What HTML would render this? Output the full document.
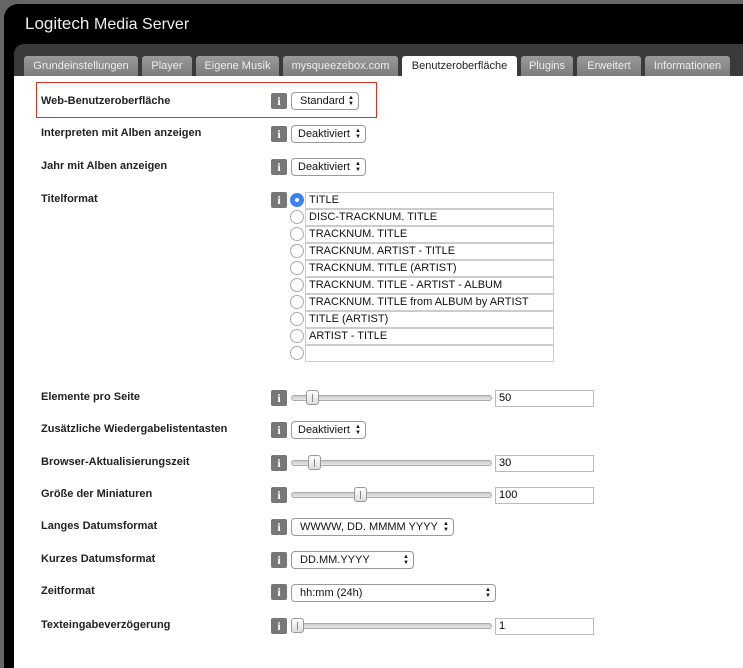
<!DOCTYPE html><html><head><style>
*{box-sizing:border-box;margin:0;padding:0}
html,body{width:743px;height:668px;overflow:hidden}
body{background:#666;position:relative;font-family:"Liberation Sans",sans-serif}
.a{position:absolute}
#blk{left:4px;top:4px;width:739px;height:664px;background:#000;border-radius:14px 0 0 0}
#band{left:14px;top:44px;width:729px;height:40px;background:#3a3a3a;border-radius:10px 0 0 0}
#white{left:14px;top:76px;width:729px;height:592px;background:#fff}
.tab{position:absolute;top:56px;height:20px;background:linear-gradient(#9a9a9a,#7c7c7c);color:#eee;font-size:11px;text-align:center;line-height:20px;border-radius:3px 3px 0 0}
.tab.on{background:#fff;color:#222}
.lbl{position:absolute;left:41px;font-size:11px;font-weight:bold;color:#222}
.i{position:absolute;left:271px;width:16px;height:16px;background:#777;color:#fff;font:bold 12px "Liberation Serif",serif;text-align:center;line-height:16px;border-radius:2px}
.sel{position:absolute;left:291px;height:18px;border:1px solid #999;border-radius:4px;font-size:11px;line-height:16px;padding-left:8px;color:#111;background:#fff}
.sel:after{content:"\25B2\A\25BC";white-space:pre;position:absolute;right:4px;top:2px;font-size:6px;line-height:6px}
.rad{position:absolute;left:290px;width:14px;height:14px;border:1px solid #aaa;border-radius:50%;background:#fff}
.tb{position:absolute;left:305px;width:249px;height:17px;border:1px solid #ccc;font-size:11px;line-height:15px;padding-left:3px;color:#111}
.trk{position:absolute;left:291px;width:201px;height:6px;border:1px solid #aaa;border-radius:3px;background:linear-gradient(#ccc,#e8e8e8)}
.th{position:absolute;width:13px;height:15px;border:1px solid #999;border-radius:3px;background:linear-gradient(#fff,#ddd)}
.th:after{content:"";position:absolute;left:5px;top:3px;width:1px;height:8px;background:#888}
.inp{position:absolute;left:495px;width:99px;height:17px;border:1px solid #bbb;font-size:11px;line-height:15px;padding-left:3px}
</style></head><body>
<div class="a" id="blk"></div>
<div class="a" style="left:25px;top:14px;color:#eee;font-size:17px">Logitech <span style="font-size:16px">Media Server</span></div>
<div class="a" id="band"></div>
<div class="a" id="white"></div>
<div class="tab" style="left:24px;width:114px">Grundeinstellungen</div>
<div class="tab" style="left:142px;width:50px">Player</div>
<div class="tab" style="left:196px;width:83px">Eigene Musik</div>
<div class="tab" style="left:283px;width:115px">mysqueezebox.com</div>
<div class="tab on" style="left:402px;width:115px">Benutzeroberfläche</div>
<div class="tab" style="left:521px;width:52px">Plugins</div>
<div class="tab" style="left:577px;width:64px">Erweitert</div>
<div class="tab" style="left:645px;width:85px">Informationen</div>
<div class="a" style="left:36px;top:82px;width:341px;height:36px;border:1px solid #e03020"></div>

<div class="lbl" style="top:95px">Web-Benutzeroberfläche</div><div class="i" style="top:93px">i</div><div class="sel" style="top:92px;width:68px">Standard</div>
<div class="lbl" style="top:127px">Interpreten mit Alben anzeigen</div><div class="i" style="top:126px">i</div><div class="sel" style="top:125px;width:75px;padding-left:6px">Deaktiviert</div>
<div class="lbl" style="top:160px">Jahr mit Alben anzeigen</div><div class="i" style="top:159px">i</div><div class="sel" style="top:158px;width:75px;padding-left:6px">Deaktiviert</div>
<div class="lbl" style="top:193px">Titelformat</div><div class="i" style="top:192px">i</div>
<div class="rad" style="top:193px;background:#3b82f6;border-color:#3b82f6"><div style="position:absolute;left:4px;top:4px;width:4px;height:4px;background:#fff;border-radius:50%"></div></div>
<div class="tb" style="top:192px">TITLE</div>
<div class="rad" style="top:210px"></div><div class="tb" style="top:209px">DISC-TRACKNUM. TITLE</div>
<div class="rad" style="top:227px"></div><div class="tb" style="top:226px">TRACKNUM. TITLE</div>
<div class="rad" style="top:244px"></div><div class="tb" style="top:243px">TRACKNUM. ARTIST - TITLE</div>
<div class="rad" style="top:261px"></div><div class="tb" style="top:260px">TRACKNUM. TITLE (ARTIST)</div>
<div class="rad" style="top:278px"></div><div class="tb" style="top:277px">TRACKNUM. TITLE - ARTIST - ALBUM</div>
<div class="rad" style="top:295px"></div><div class="tb" style="top:294px">TRACKNUM. TITLE from ALBUM by ARTIST</div>
<div class="rad" style="top:312px"></div><div class="tb" style="top:311px">TITLE (ARTIST)</div>
<div class="rad" style="top:329px"></div><div class="tb" style="top:328px">ARTIST - TITLE</div>
<div class="rad" style="top:346px"></div><div class="tb" style="top:345px"></div>

<div class="lbl" style="top:391px">Elemente pro Seite</div><div class="i" style="top:390px">i</div><div class="trk" style="top:395px"></div><div class="th" style="left:306px;top:390px"></div><div class="inp" style="top:390px">50</div>
<div class="lbl" style="top:423px">Zusätzliche Wiedergabelistentasten</div><div class="i" style="top:422px">i</div><div class="sel" style="top:421px;width:75px;padding-left:6px">Deaktiviert</div>
<div class="lbl" style="top:456px">Browser-Aktualisierungszeit</div><div class="i" style="top:455px">i</div><div class="trk" style="top:460px"></div><div class="th" style="left:308px;top:455px"></div><div class="inp" style="top:455px">30</div>
<div class="lbl" style="top:488px">Größe der Miniaturen</div><div class="i" style="top:487px">i</div><div class="trk" style="top:492px"></div><div class="th" style="left:354px;top:487px"></div><div class="inp" style="top:487px">100</div>
<div class="lbl" style="top:520px">Langes Datumsformat</div><div class="i" style="top:519px">i</div><div class="sel" style="top:518px;width:163px">WWWW, DD. MMMM YYYY</div>
<div class="lbl" style="top:553px">Kurzes Datumsformat</div><div class="i" style="top:552px">i</div><div class="sel" style="top:551px;width:123px">DD.MM.YYYY</div>
<div class="lbl" style="top:585px">Zeitformat</div><div class="i" style="top:584px">i</div><div class="sel" style="top:584px;width:205px">hh:mm (24h)</div>
<div class="lbl" style="top:619px">Texteingabeverzögerung</div><div class="i" style="top:618px">i</div><div class="trk" style="top:623px"></div><div class="th" style="left:291px;top:618px"></div><div class="inp" style="top:618px">1</div>
</body></html>
